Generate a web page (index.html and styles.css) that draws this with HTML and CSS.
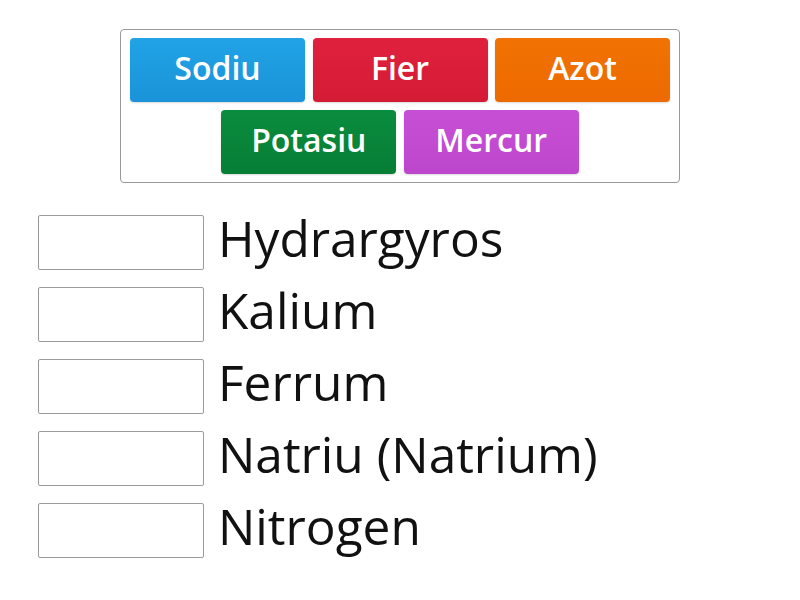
FILE: index.html
```html
<!DOCTYPE html>
<html>
<head>
<meta charset="utf-8">
<link rel="stylesheet" href="styles.css">
</head>
<body>
<div class="bank">
  <div class="tile blue">Sodiu</div>
  <div class="tile red">Fier</div>
  <div class="tile orange">Azot</div>
  <div class="tile green">Potasiu</div>
  <div class="tile purple">Mercur</div>
</div>
<div class="list">
  <div class="row"><div class="slot"></div><div class="label">Hydrargyros</div></div>
  <div class="row"><div class="slot"></div><div class="label">Kalium</div></div>
  <div class="row"><div class="slot"></div><div class="label">Ferrum</div></div>
  <div class="row"><div class="slot"></div><div class="label">Natriu (Natrium)</div></div>
  <div class="row"><div class="slot"></div><div class="label">Nitrogen</div></div>
</div>
</body>
</html>
```
FILE: styles.css
```css
html, body {
  margin: 0;
  padding: 0;
  background: #fff;
  font-family: "Open Sans", "Liberation Sans", sans-serif;
}
.bank {
  box-sizing: border-box;
  margin: 29px 0 0 120px;
  width: 560px;
  height: 154px;
  border: 1px solid #9a9a9a;
  border-radius: 4px;
  padding: 8px;
  display: flex;
  flex-wrap: wrap;
  justify-content: center;
  align-content: flex-start;
  gap: 8px 7.5px;
}
.tile {
  box-sizing: border-box;
  width: 175px;
  height: 64px;
  padding-bottom: 6px;
  border-radius: 4px;
  color: #fff;
  font-weight: 600;
  font-size: 32px;
  display: flex;
  align-items: center;
  justify-content: center;
  box-shadow: 0 1px 2px rgba(0,0,0,0.15);
}
.blue { background: linear-gradient(#21a3e6, #1a93d8); }
.red { background: linear-gradient(#e0213e, #d41b35); }
.orange { background: linear-gradient(#f27203, #ec6a00); }
.green { background: linear-gradient(#0a8c3e, #067e35); }
.purple { background: linear-gradient(#c74fd6, #bd47cc); }
.list {
  margin: 32px 0 0 38px;
  display: flex;
  flex-direction: column;
  gap: 17px;
}
.row {
  display: flex;
  align-items: center;
  gap: 14px;
  height: 55px;
}
.slot {
  box-sizing: border-box;
  width: 166px;
  height: 55px;
  border: 1px solid #9a9a9a;
  border-radius: 2px;
}
.label {
  font-size: 49.6px;
  color: #111;
  line-height: 1;
  padding-bottom: 8px;
}
```
